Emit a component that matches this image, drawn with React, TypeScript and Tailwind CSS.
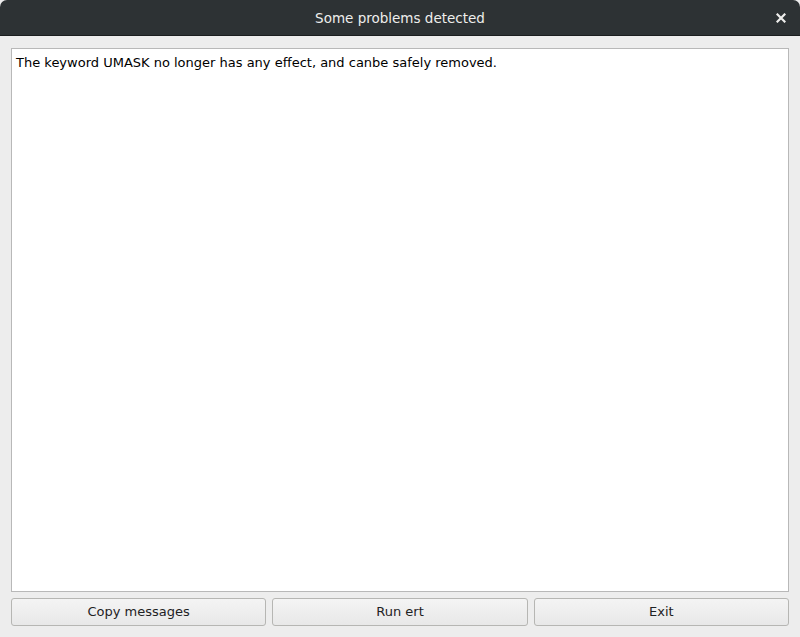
export default function App() {
  return (
    <div
      className="w-[800px] h-[637px] flex flex-col bg-[#ededed] overflow-hidden"
      style={{ fontFamily: '"DejaVu Sans", "Noto Sans", sans-serif' }}
    >
      {/* Title bar */}
      <div className="relative h-[36px] shrink-0 flex items-center justify-center bg-[#2d3234] border-b border-[#1b1e1f] rounded-t-[7px]">
        <span className="text-[13.5px] text-[#eeeeec] pt-[1px]">Some problems detected</span>
        <button className="absolute right-[12px] top-[11px] w-[14px] h-[14px] flex items-center justify-center">
          <svg width="10" height="10" viewBox="0 0 10 10">
            <path d="M1.5 1.5 L8.5 8.5 M8.5 1.5 L1.5 8.5" stroke="#eeeeec" strokeWidth="2.2" strokeLinecap="square" />
          </svg>
        </button>
      </div>

      {/* Body */}
      <div className="flex-1 flex flex-col px-[11px] pt-[12px] pb-[11px] gap-[6px]">
        <div className="flex-1 bg-white border border-[#b8b8b8] px-[4px] py-[5px]">
          <p className="text-[13px] text-black leading-[18px]">
            The keyword UMASK no longer has any effect, and canbe safely removed.
          </p>
        </div>
        <div className="h-[28px] grid grid-cols-3 gap-[6px]">
          {['Copy messages', 'Run ert', 'Exit'].map((label) => (
            <button
              key={label}
              className="h-full rounded-[3px] border border-[#b6b6b3] bg-gradient-to-b from-[#f4f4f4] to-[#e8e8e8] text-[13px] text-[#1e2224]"
            >
              {label}
            </button>
          ))}
        </div>
      </div>
    </div>
  );
}
